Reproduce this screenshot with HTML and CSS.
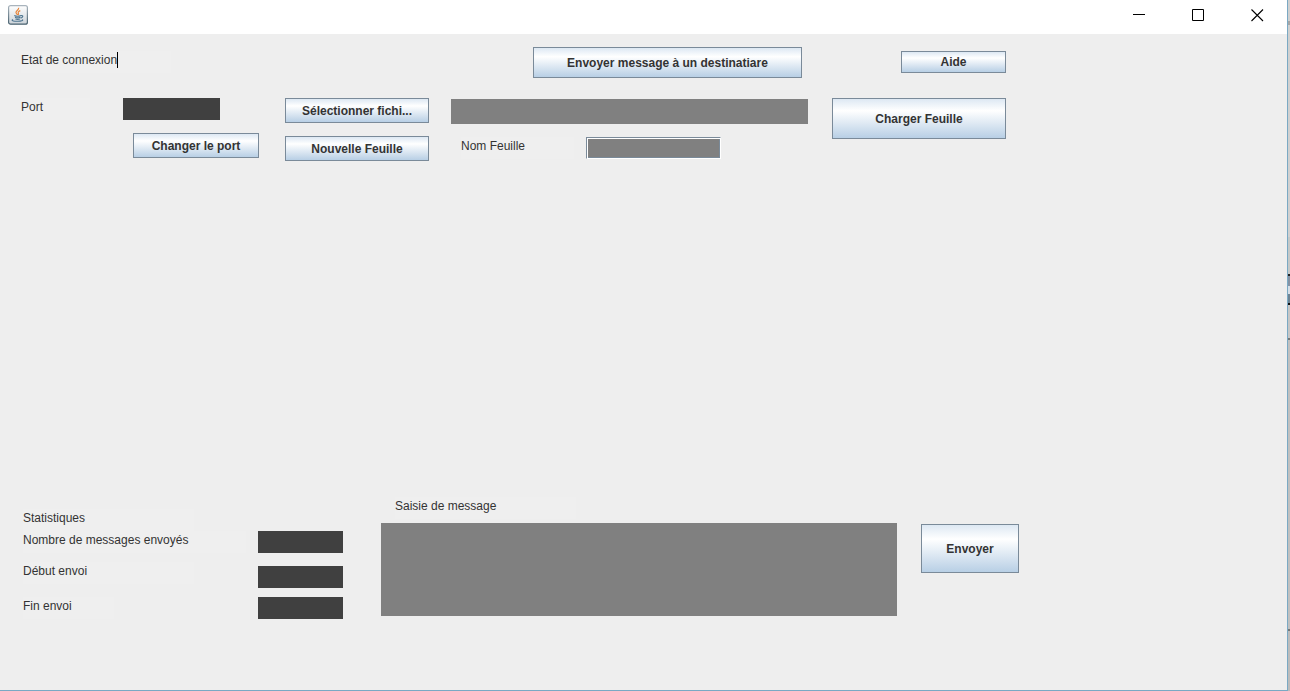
FILE: index.html
```html
<!DOCTYPE html>
<html lang="fr">
<head>
<meta charset="utf-8">
<title>Messages</title>
<link rel="stylesheet" href="styles.css">
</head>
<body>
<div class="window">
  <header class="titlebar">
    <svg class="app-icon" width="20" height="20" viewBox="0 0 20 20" aria-hidden="true">
      <defs>
        <linearGradient id="tile" x1="0" y1="0" x2="0" y2="1">
          <stop offset="0" stop-color="#ffffff"/>
          <stop offset="1" stop-color="#ccd3d9"/>
        </linearGradient>
        <linearGradient id="rim" x1="0" y1="0" x2="0" y2="1">
          <stop offset="0" stop-color="#a9b4bd"/>
          <stop offset="1" stop-color="#48616f"/>
        </linearGradient>
      </defs>
      <rect x="0.6" y="0.6" width="18.8" height="18.6" rx="2" fill="url(#tile)" stroke="url(#rim)" stroke-width="1.2"/>
      <path d="M10.6 2.8c.8 2-2.800 2.600-2.600 4.600 0 1 1.200 1.600 1.500 2.600M12.300 5.600c-1.600.6-2.500 1.400-2 2.300.4.800.6 1.300-.3 2.200" fill="none" stroke="#e8853a" stroke-width="1.200"/>
      <path d="M6.300 10.400c1.500.8 5 .8 6.700 0M7 12.300c1.400.6 3.900.6 5.300 0M7.400 14c1.300.5 3.300.5 4.500 0M13 10.600c2.600-.5 2.300 1.800-.4 2.600M5 14.400c-3 1.400 2 2 4.800 1.900 3.200 0 6-.8 4.500-1.800" fill="none" stroke="#4f7590" stroke-width="1.100"/>
    </svg>
    <div class="window-controls">
      <button class="control" type="button" aria-label="Réduire"><svg width="13" height="13" viewBox="0 0 13 13"><path d="M0 5.500h12" stroke="#000" fill="none"/></svg></button>
      <button class="control" type="button" aria-label="Agrandir"><svg width="13" height="13" viewBox="0 0 13 13"><path d="M.5.5h11v11H.5z" stroke="#000" fill="none"/></svg></button>
      <button class="control" type="button" aria-label="Fermer"><svg width="13" height="13" viewBox="0 0 13 13"><path d="M.5.5l11.500 11.500M12 .5L.5 12" stroke="#000" stroke-width="1.100" fill="none"/></svg></button>
    </div>
  </header>

  <main class="content">
    <section class="status-row">
      <div class="label label-status"><span class="caret">Etat de connexion</span></div>
      <button class="button button-recipient" type="button">Envoyer message à un destinatiare</button>
      <button class="button button-help" type="button">Aide</button>
    </section>

    <section class="settings">
      <div class="port">
        <div class="port-row">
          <label class="label label-port" for="port">Port</label>
          <input class="field field-port" id="port" type="text">
        </div>
        <button class="button button-port" type="button">Changer le port</button>
      </div>
      <div class="sheet-actions">
        <button class="button button-sheet" type="button">Sélectionner fichi...</button>
        <button class="button button-sheet" type="button">Nouvelle Feuille</button>
      </div>
      <div class="sheet">
        <input class="field field-file" type="text" aria-label="Fichier">
        <div class="sheet-row">
          <label class="label label-sheet" for="sheet">Nom Feuille</label>
          <input class="field field-sheet" id="sheet" type="text">
        </div>
      </div>
      <button class="button button-load" type="button">Charger Feuille</button>
    </section>

    <section class="bottom">
      <div class="stats">
        <div class="label label-medium">Statistiques</div>
        <div class="stat">
          <label class="label label-wide" for="count">Nombre de messages envoyés</label>
          <input class="field field-stat" id="count" type="text">
        </div>
        <div class="stat stat-tall">
          <label class="label label-medium" for="start">Début envoi</label>
          <input class="field field-stat" id="start" type="text">
        </div>
        <div class="stat">
          <label class="label label-short" for="end">Fin envoi</label>
          <input class="field field-stat" id="end" type="text">
        </div>
      </div>
      <div class="message">
        <label class="label label-message" for="message">Saisie de message</label>
        <textarea class="field field-message" id="message"></textarea>
      </div>
      <button class="button button-send" type="button">Envoyer</button>
    </section>
  </main>
</div>
</body>
</html>
```
FILE: styles.css
```css
* {
  box-sizing: border-box;
}

body {
  margin: 0;
  padding-right: 2px;
  font: 12px/16px "Liberation Sans", Arial, sans-serif;
  color: #333;
  background: linear-gradient(
    #d0d0d0 0 21px, #a6a6a6 21px 25px, #d0d0d0 25px 237px, #c4c8c8 237px 274px,
    #222 274px 276px, #8492a4 276px 286px, #d5dde6 286px 294px, #6e8494 294px 303px,
    #111 303px 305px, #c6c6c6 305px 338px, #777 338px 340px, #c0c0c0 340px 629px,
    #777 629px 631px, #bcbcbc 631px);
}

.window {
  display: flex;
  flex-direction: column;
  min-height: 100vh;
  background: #eee;
  border: solid #7aa9c4;
  border-width: 0 1px 1px 0;
}

.titlebar {
  display: flex;
  justify-content: space-between;
  height: 34px;
  padding-left: 8px;
  background: #fff;
}

.app-icon {
  margin-top: 5px;
}

.window-controls {
  display: flex;
}

.control {
  width: 59px;
  padding: 9px 0 0;
  border: 0;
  background: none;
  line-height: 0;
  display: flex;
  justify-content: center;
}

.content {
  display: flex;
  flex: 1;
  flex-direction: column;
  padding: 13px 0 71px 21px;
}

.label {
  display: block;
  flex: none;
  height: 22px;
  padding-top: 1px;
  background: #efefef;
  white-space: nowrap;
}

.field {
  display: block;
  height: 22px;
  margin: 0;
  padding: 0 2px;
  border: 0;
  border-radius: 0;
  background: #404040;
  color: #fff;
  font: inherit;
}

.button {
  flex: none;
  height: 25px;
  padding: 0;
  border: 1px solid #7a8a99;
  border-radius: 0;
  background: linear-gradient(#dde8f3, #fff 30%, #b8cfe5);
  color: #333;
  font: bold 12px/16px "Liberation Sans", Arial, sans-serif;
}

.status-row {
  display: flex;
  align-items: flex-start;
  padding-right: 281px;
}

.label-status {
  width: 150px;
  margin-top: 4px;
}

.caret {
  display: inline-block;
  border-right: 1px solid #000;
}

.button-recipient {
  width: 269px;
  height: 31px;
  margin-left: auto;
}

.button-help {
  width: 105px;
  height: 22px;
  margin: 4px 0 0 99px;
}

.settings {
  display: flex;
  align-items: flex-start;
  margin-top: 20px;
  padding-right: 281px;
}

.port {
  display: flex;
  flex: none;
  flex-direction: column;
  gap: 13px;
  width: 238px;
}

.port-row {
  display: flex;
  gap: 33px;
}

.label-port {
  width: 69px;
}

.field-port {
  width: 97px;
}

.button-port {
  width: 126px;
  align-self: flex-end;
}

.sheet-actions {
  display: flex;
  flex-direction: column;
  gap: 13px;
  margin: 0 22px 0 26px;
}

.button-sheet {
  width: 144px;
}

.sheet {
  flex: 1;
  padding-top: 1px;
}

.field-file {
  width: 100%;
  height: 25px;
  background: #808080;
}

.sheet-row {
  display: flex;
  gap: 12px;
  margin: 13px 0 0 10px;
}

.label-sheet {
  width: 113px;
}

.field-sheet {
  width: 135px;
  background: #808080;
  border: 1px solid;
  border-color: #7a8a99 #fff #fff #7a8a99;
  box-shadow: inset 1px 1px #fff, inset -1px -1px #7a8a99;
}

.button-load {
  width: 174px;
  height: 41px;
  margin-left: 24px;
}

.bottom {
  display: flex;
  align-items: flex-start;
  margin-top: auto;
  padding: 0 268px 0 2px;
}

.stats {
  flex: none;
  width: 320px;
  margin-top: 12px;
}

.stat {
  display: flex;
  justify-content: space-between;
}

.stat + .stat {
  margin-top: 9px;
}

.stat-tall {
  height: 26px;
}

.stat-tall .field {
  align-self: flex-end;
}

.field-stat {
  width: 85px;
}

.label-short {
  width: 91px;
}

.label-medium {
  width: 171px;
}

.label-wide {
  width: 223px;
}

.message {
  flex: 1;
  margin: 0 24px 0 38px;
}

.label-message {
  width: 181px;
  margin: 0 0 4px 14px;
}

.field-message {
  width: 100%;
  height: 93px;
  background: #808080;
  resize: none;
}

.button-send {
  width: 98px;
  height: 49px;
  margin-top: 27px;
}
```
